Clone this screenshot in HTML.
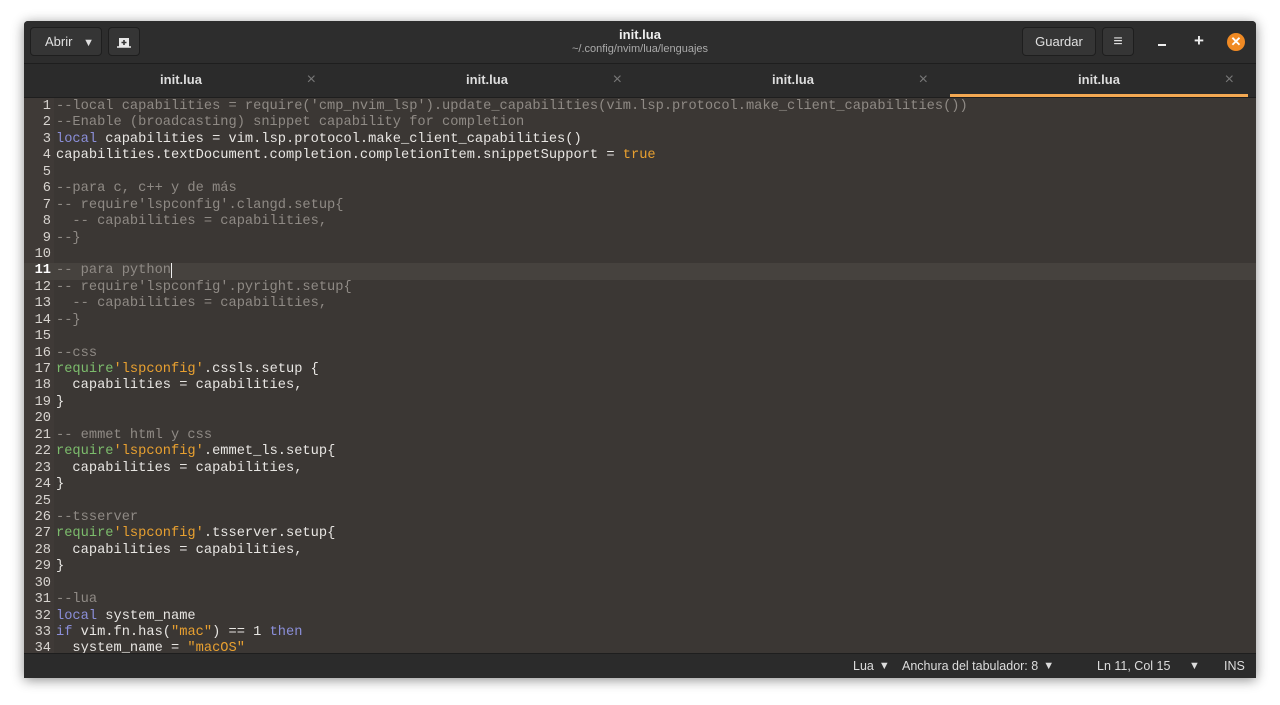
<!DOCTYPE html><html><head><meta charset="utf-8"><style>
body{margin:0;width:1280px;height:705px;background:#fff;overflow:hidden;font-family:"Liberation Sans",sans-serif}
.win{position:absolute;left:24px;top:21px;width:1232px;height:657px;background:#2b2b2b;box-shadow:0 2px 12px rgba(0,0,0,.45);border-radius:4px 4px 0 0;overflow:hidden}
.hdr{position:absolute;left:0;top:0;width:100%;height:42px;background:#2d2d2d;border-bottom:1px solid #1e1e1e}
.btn{position:absolute;top:6px;height:29px;background:#353535;border:1px solid #1e1e1e;border-radius:4px;color:#e0e0e0;font-size:13px;line-height:28px;text-align:center;box-sizing:border-box}
.title{position:absolute;left:0;right:0;top:6px;text-align:center;color:#eee;font-weight:bold;font-size:13px}
.sub{position:absolute;left:0;right:0;top:22px;text-align:center;color:#aaa;font-size:11px}
.tabs{position:absolute;top:43px;left:0;width:100%;height:33px;background:#2b2b2b;border-bottom:1px solid #1e1e1e}
.tab{position:absolute;top:0;width:298px;height:33px;color:#ddd;font-weight:bold;font-size:13px;text-align:center;line-height:32px;box-sizing:border-box}
.tab .x{position:absolute;right:14px;top:0;color:#777;font-weight:normal;font-size:16px}
.ed{position:absolute;top:77px;left:0;width:100%;height:555px;background:#3b3734;overflow:hidden}
.gut{position:absolute;left:0;top:0;width:30px;height:100%;background:#3f3a37}
pre{margin:0;position:absolute;left:0;top:1px;font-family:"Liberation Mono",monospace;font-size:13.7px;line-height:16.45px;color:#e8e6e3}
.l{display:block;height:16.45px;white-space:pre}
.n{display:inline-block;width:27px;text-align:right;color:#d8d4d0;margin-right:5px}
.cur{background:#46423e}
.c{color:#8f8a85}.k{color:#8b8fd9}.s{color:#e8a030}.g{color:#7cbc6c}
.st{position:absolute;top:632px;left:0;width:100%;height:25px;background:#2b2b2b;border-top:1px solid #1e1e1e;color:#ddd;font-size:12.5px;line-height:24px}
.st span{position:absolute}
.tri{font-size:11px;margin-left:5px}
</style></head><body><div class="win">
<div class="hdr">
<div class="btn" style="left:6px;width:72px;text-align:left;padding-left:14px">Abrir <span class="tri" style="margin-left:7px">▼</span></div>
<div class="btn" style="left:84px;width:32px"><svg width="14" height="12" viewBox="0 0 14 12" style="margin-top:8px"><path d="M2 2h10v9H2z" fill="#e8e8e8"/><path d="M7 4v5M4.5 6.5h5" stroke="#353535" stroke-width="1.6"/><path d="M0 11h14" stroke="#e8e8e8" stroke-width="1.5"/></svg></div>
<div class="title">init.lua</div><div class="sub">~/.config/nvim/lua/lenguajes</div>
<div class="btn" style="left:998px;width:74px">Guardar</div>
<div class="btn" style="left:1078px;width:32px;font-size:16px">≡</div>
<div style="position:absolute;left:1134px;width:8px;height:2px;background:#eee;top:23px"></div>
<div style="position:absolute;left:1170px;top:10px;color:#eee;font-size:17px;font-weight:bold">+</div>
<div style="position:absolute;left:1203px;top:12px;width:18px;height:18px;border-radius:50%;background:#f08a24;color:#fff;font-size:13px;font-weight:bold;text-align:center;line-height:18px">✕</div>
</div>
<div class="tabs">
<div class="tab" style="left:8px">init.lua<span class="x">×</span></div>
<div class="tab" style="left:314px">init.lua<span class="x">×</span></div>
<div class="tab" style="left:620px">init.lua<span class="x">×</span></div>
<div class="tab" style="left:926px;border-bottom:3px solid #f3a852">init.lua<span class="x">×</span></div>
</div>
<div class="ed"><div class="gut"></div><pre>
<span class="l"><span class="n">1</span><span class="c">--local capabilities = require('cmp_nvim_lsp').update_capabilities(vim.lsp.protocol.make_client_capabilities())</span></span><span class="l"><span class="n">2</span><span class="c">--Enable (broadcasting) snippet capability for completion</span></span><span class="l"><span class="n">3</span><span class="k">local</span> capabilities = vim.lsp.protocol.make_client_capabilities()</span><span class="l"><span class="n">4</span>capabilities.textDocument.completion.completionItem.snippetSupport = <span class="s">true</span></span><span class="l"><span class="n">5</span></span><span class="l"><span class="n">6</span><span class="c">--para c, c++ y de más</span></span><span class="l"><span class="n">7</span><span class="c">-- require'lspconfig'.clangd.setup{</span></span><span class="l"><span class="n">8</span><span class="c">  -- capabilities = capabilities,</span></span><span class="l"><span class="n">9</span><span class="c">--}</span></span><span class="l"><span class="n">10</span></span><span class="l cur" style="width:1232px"><span class="n" style="font-weight:bold;color:#fff">11</span><span class="c">-- para python</span><span style="border-left:1px solid #eee"></span></span><span class="l"><span class="n">12</span><span class="c">-- require'lspconfig'.pyright.setup{</span></span><span class="l"><span class="n">13</span><span class="c">  -- capabilities = capabilities,</span></span><span class="l"><span class="n">14</span><span class="c">--}</span></span><span class="l"><span class="n">15</span></span><span class="l"><span class="n">16</span><span class="c">--css</span></span><span class="l"><span class="n">17</span><span class="g">require</span><span class="s">'lspconfig'</span>.cssls.setup {</span><span class="l"><span class="n">18</span>  capabilities = capabilities,</span><span class="l"><span class="n">19</span>}</span><span class="l"><span class="n">20</span></span><span class="l"><span class="n">21</span><span class="c">-- emmet html y css</span></span><span class="l"><span class="n">22</span><span class="g">require</span><span class="s">'lspconfig'</span>.emmet_ls.setup{</span><span class="l"><span class="n">23</span>  capabilities = capabilities,</span><span class="l"><span class="n">24</span>}</span><span class="l"><span class="n">25</span></span><span class="l"><span class="n">26</span><span class="c">--tsserver</span></span><span class="l"><span class="n">27</span><span class="g">require</span><span class="s">'lspconfig'</span>.tsserver.setup{</span><span class="l"><span class="n">28</span>  capabilities = capabilities,</span><span class="l"><span class="n">29</span>}</span><span class="l"><span class="n">30</span></span><span class="l"><span class="n">31</span><span class="c">--lua</span></span><span class="l"><span class="n">32</span><span class="k">local</span> system_name</span><span class="l"><span class="n">33</span><span class="k">if</span> vim.fn.has(<span class="s">"mac"</span>) == 1 <span class="k">then</span></span><span class="l"><span class="n">34</span>  system_name = <span class="s">"macOS"</span></span></pre></div>
<div class="st">
<span style="left:829px">Lua<span class="tri">▼</span></span>
<span style="left:878px">Anchura del tabulador: 8<span class="tri">▼</span></span>
<span style="left:1073px">Ln 11, Col 15</span>
<span style="left:1160px"><span class="tri">▼</span></span>
<span style="left:1200px">INS</span>
</div>
</div></body></html>
